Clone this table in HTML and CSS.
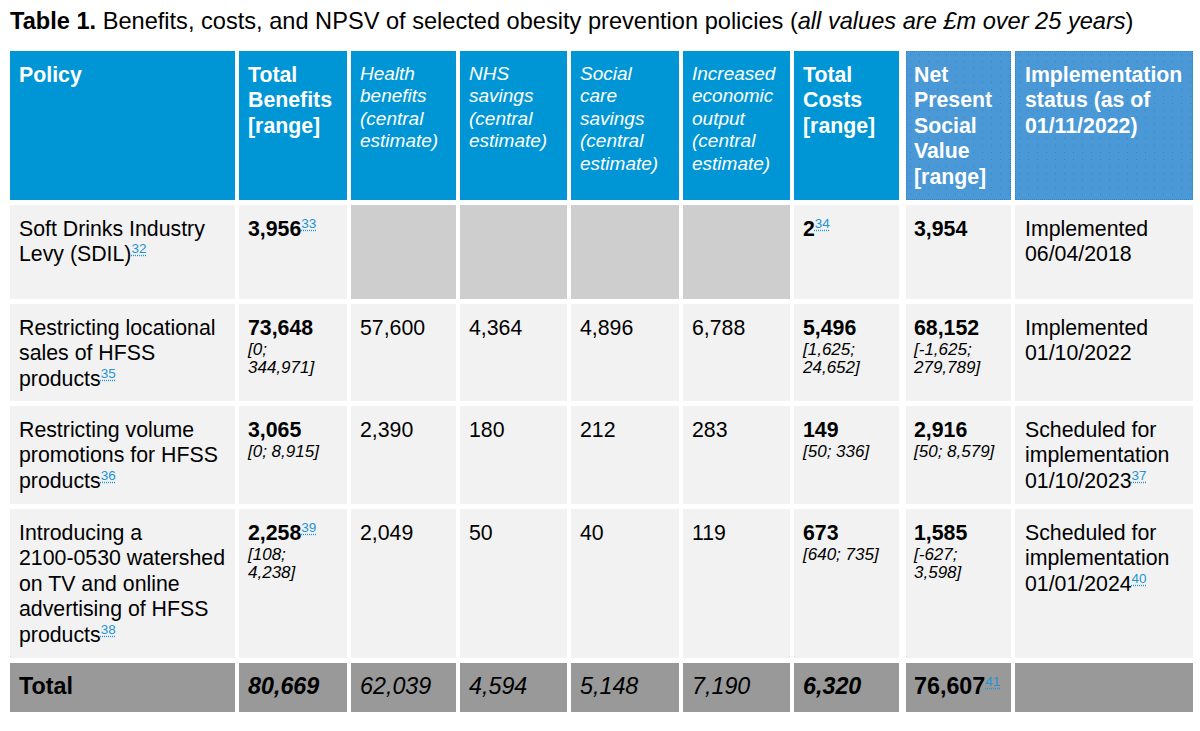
FILE: index.html
```html
<!DOCTYPE html>
<html lang="en">
<head>
<meta charset="utf-8">
<title>Table 1</title>
<link rel="stylesheet" href="styles.css">
</head>
<body>
<div class="page">
  <p class="caption"><b>Table 1.</b> Benefits, costs, and NPSV of selected obesity prevention policies (<i>all values are £m over 25 years</i>)</p>

  <div class="tbl">
    <!-- header -->
    <div class="c h">Policy</div>
    <div class="c h">Total<br>Benefits<br>[range]</div>
    <div class="c h it">Health<br>benefits<br>(central<br>estimate)</div>
    <div class="c h it">NHS<br>savings<br>(central<br>estimate)</div>
    <div class="c h it">Social<br>care<br>savings<br>(central<br>estimate)</div>
    <div class="c h it">Increased<br>economic<br>output<br>(central<br>estimate)</div>
    <div class="c h">Total<br>Costs<br>[range]</div>
    <div class="c h alt npsv">Net<br>Present<br>Social<br>Value<br>[range]</div>
    <div class="c h alt impl">Implementation<br>status (as of<br>01/11/2022)</div>

    <!-- row 1 -->
    <div class="c">Soft Drinks Industry<br>Levy (SDIL)<sup class="ref">32</sup></div>
    <div class="c"><b>3,956</b><sup class="ref">33</sup></div>
    <div class="c na"></div>
    <div class="c na"></div>
    <div class="c na"></div>
    <div class="c na"></div>
    <div class="c"><b>2</b><sup class="ref">34</sup></div>
    <div class="c npsv"><b>3,954</b></div>
    <div class="c impl">Implemented<br>06/04/2018</div>

    <!-- row 2 -->
    <div class="c">Restricting locational<br>sales of HFSS<br>products<sup class="ref">35</sup></div>
    <div class="c"><b>73,648</b><span class="rng">[0;<br>344,971]</span></div>
    <div class="c">57,600</div>
    <div class="c">4,364</div>
    <div class="c">4,896</div>
    <div class="c">6,788</div>
    <div class="c"><b>5,496</b><span class="rng">[1,625;<br>24,652]</span></div>
    <div class="c npsv"><b>68,152</b><span class="rng">[-1,625;<br>279,789]</span></div>
    <div class="c impl">Implemented<br>01/10/2022</div>

    <!-- row 3 -->
    <div class="c">Restricting volume<br>promotions for HFSS<br>products<sup class="ref">36</sup></div>
    <div class="c"><b>3,065</b><span class="rng">[0; 8,915]</span></div>
    <div class="c">2,390</div>
    <div class="c">180</div>
    <div class="c">212</div>
    <div class="c">283</div>
    <div class="c"><b>149</b><span class="rng">[50; 336]</span></div>
    <div class="c npsv"><b>2,916</b><span class="rng">[50; 8,579]</span></div>
    <div class="c impl">Scheduled for<br>implementation<br>01/10/2023<sup class="ref">37</sup></div>

    <!-- row 4 -->
    <div class="c">Introducing a<br>2100-0530 watershed<br>on TV and online<br>advertising of HFSS<br>products<sup class="ref">38</sup></div>
    <div class="c"><b>2,258</b><sup class="ref">39</sup><span class="rng">[108;<br>4,238]</span></div>
    <div class="c">2,049</div>
    <div class="c">50</div>
    <div class="c">40</div>
    <div class="c">119</div>
    <div class="c"><b>673</b><span class="rng">[640; 735]</span></div>
    <div class="c npsv"><b>1,585</b><span class="rng">[-627;<br>3,598]</span></div>
    <div class="c impl">Scheduled for<br>implementation<br>01/01/2024<sup class="ref">40</sup></div>

    <!-- total -->
    <div class="c t"><b>Total</b></div>
    <div class="c t"><b><i>80,669</i></b></div>
    <div class="c t"><i>62,039</i></div>
    <div class="c t"><i>4,594</i></div>
    <div class="c t"><i>5,148</i></div>
    <div class="c t"><i>7,190</i></div>
    <div class="c t"><b><i>6,320</i></b></div>
    <div class="c t npsv"><b>76,607</b><sup class="ref">41</sup></div>
    <div class="c t impl"></div>
  </div>
</div>
</body>
</html>
```
FILE: styles.css
```css
html, body {
  margin: 0;
  padding: 0;
  background: #ffffff;
}

body {
  font-family: "Liberation Sans", Arial, sans-serif;
  color: #000000;
}

.page {
  padding: 0 0 0 10px;
}

.caption {
  margin: 0;
  padding-top: 8px;
  height: 43px;
  box-sizing: content-box;
  font-size: 23.6px;
  line-height: 27px;
  font-weight: normal;
  white-space: nowrap;
}

.tbl {
  display: grid;
  grid-template-columns: 225px 108px 105px 107px 108px 107px 105px 108px 178px;
  grid-template-rows: 149px 94px 97px 98px 149px 49px;
  column-gap: 4px;
  row-gap: 5px;
}

.c {
  background: #f2f2f2;
  padding: 11.5px 3px 0 9px;
  font-size: 21.3px;
  line-height: 25.5px;
  box-sizing: border-box;
  min-width: 0;
}

.h {
  background: #0096d6;
  color: #ffffff;
  font-weight: bold;
}

.h.it {
  font-weight: normal;
  font-style: italic;
  font-size: 19px;
  line-height: 22.5px;
}

.h.alt {
  background-color: #4a98d6;
  background-image: radial-gradient(circle, rgba(20, 120, 200, 0.55) 0.6px, transparent 1px);
  background-size: 9px 7px;
  outline: 1px dotted #2f88cc;
  outline-offset: -1px;
}

.npsv {
  margin-left: 3px;
  padding-left: 8px;
}

.impl {
  padding-left: 10px;
}

.na {
  background: #cecece;
}

.rng {
  display: block;
  font-style: italic;
  font-size: 17px;
  line-height: 18.4px;
  margin-top: 0;
}

.ref {
  font-size: 13.5px;
  line-height: 0;
  vertical-align: 8px;
  color: #1f94d4;
  text-decoration: underline dotted #1f94d4;
  text-underline-offset: 2px;
  font-weight: normal;
  font-style: normal;
}

.t {
  background: #999999;
  font-size: 23.3px;
  padding-top: 11px;
}
```
